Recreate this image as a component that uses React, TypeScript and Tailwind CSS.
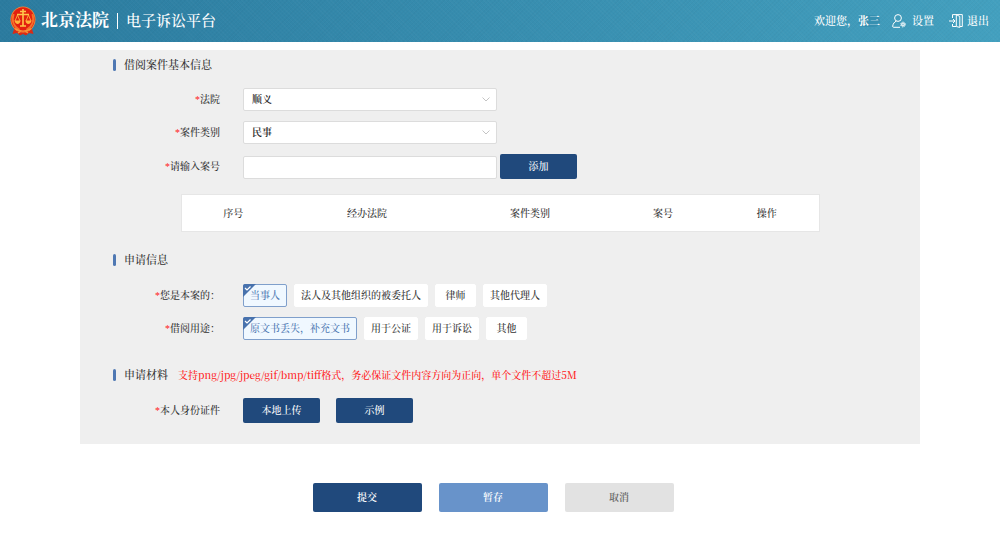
import React, { useState } from "react";
import clsx from "clsx";

const parties = ["当事人", "法人及其他组织的被委托人", "律师", "其他代理人"];
const purposes = ["原文书丢失，补充文书", "用于公证", "用于诉讼", "其他"];

const columns = [
  { title: "序号", width: "w-[104px]" },
  { title: "经办法院", width: "w-[164px]" },
  { title: "案件类别", width: "w-[162px]" },
  { title: "案号", width: "w-[104px]" },
  { title: "操作", width: "w-[104px]" },
];

const Emblem = () => (
  <svg viewBox="0 0 26 30" className="h-[30px] w-[26px]" aria-hidden="true">
    <path d="M5 20 L2.5 28 L7 27 L10 29.5 L13 28 L16 29.5 L19 27 L23.5 28 L21 20 Z" fill="#dc2a14" />
    <ellipse cx="13" cy="13.5" rx="12.5" ry="13" fill="#f08a3a" />
    <ellipse cx="13" cy="13.5" rx="11.6" ry="12.2" fill="#e3200f" />
    <path d="M3.5 8 C1.5 15 4 21 9.5 24 M22.5 8 C24.5 15 22 21 16.5 24" stroke="#f5702a" strokeWidth="2" fill="none" />
    <path d="M13 3 V20 M7 8.5 H19 M10 5.5 H16 M10 20 H16" stroke="#ffc64a" strokeWidth="1.6" fill="none" />
    <path d="M7.5 9 L5 15 M7.5 9 L10 15 M18.5 9 L16 15 M18.5 9 L21 15" stroke="#ffb03a" strokeWidth="0.9" fill="none" />
    <path d="M4.5 14.5 H10.5 C10.5 19 5 19 4.5 14.5 Z M15.5 14.5 H21.5 C21 19 15.5 19 15.5 14.5 Z" fill="#ffb43c" />
    <path d="M5 22.5 C9 26 17 26 21 22.5 M8 27 L10.5 25.5 M18 27 L15.5 25.5" stroke="#f8963a" strokeWidth="1.2" fill="none" />
  </svg>
);

const UserIcon = () => (
  <svg viewBox="0 0 14 14" className="size-[14px]" fill="none" stroke="currentColor" aria-hidden="true">
    <circle cx="6" cy="4" r="3.4" />
    <path d="M8 13.3 H1.6 C0.9 13.3 0.6 12.9 0.7 12.2 C1 9.8 2.4 7.8 4.4 7.1" />
    <circle cx="11" cy="10.5" r="1.6" fill="currentColor" fillOpacity="0.5" />
    <circle cx="11" cy="10.5" r="2.5" strokeDasharray="1 1" strokeWidth="0.8" />
  </svg>
);

const ExitIcon = () => (
  <svg viewBox="0 0 14 14" className="size-[14px]" fill="none" stroke="currentColor" aria-hidden="true">
    <path d="M3.5 4 V0.6 H13.3 V12.5 H11 M3.5 10 V12.5 H7" />
    <path d="M7.3 0.6 L10.8 2.5 V13.4 L7.3 12.5 Z" />
    <path d="M0 7 H6 M4 5 L6 7 L4 9" />
  </svg>
);

const SectionTitle: React.FC<{ title: string; note?: string }> = ({ title, note }) => (
  <div className="flex h-4 items-center pl-[33px]">
    <span className="h-3 w-[3px] rounded-full bg-[#4f78b3]" />
    <h2 className="ml-2 text-[11px] leading-4 font-medium text-[#333]">{title}</h2>
    {note && (
      <p className="ml-[10px] font-['Noto_Serif_CJK_SC','Liberation_Serif',serif] text-[10px] leading-4 font-medium text-[#ff1a1a]">
        {note}
      </p>
    )}
  </div>
);

const LabelText: React.FC<{ children: React.ReactNode }> = ({ children }) => (
  <>
    <span className="text-[#ff1a1a]">*</span>
    {children}
  </>
);

const labelClass = "w-[140px] shrink-0 text-right text-[10px] leading-4 font-medium text-[#333]";

const SelectField: React.FC<{ id: string; label: string; options: string[] }> = ({
  id,
  label,
  options,
}) => (
  <div className="flex items-center gap-[23px]">
    <label htmlFor={id} className={labelClass}>
      <LabelText>{label}</LabelText>
    </label>
    <div className="relative w-[254px]">
      <select
        id={id}
        className="block h-[23px] w-full appearance-none rounded-xs border border-[#dcdcdc] bg-white pl-2 text-[10px] font-semibold text-[#222]"
      >
        {options.map((option) => (
          <option key={option}>{option}</option>
        ))}
      </select>
      <svg
        viewBox="0 0 8 5"
        className="pointer-events-none absolute top-[9px] right-[7px] h-[5px] w-2"
        fill="none"
        stroke="#c4c4c4"
        aria-hidden="true"
      >
        <path d="M0.5 0.5 L4 4 L7.5 0.5" />
      </svg>
    </div>
  </div>
);

const OptionGroup: React.FC<{ name: string; label: string; options: string[] }> = ({
  name,
  label,
  options,
}) => {
  const [selected, setSelected] = useState(options[0]);

  return (
    <div role="radiogroup" aria-labelledby={name} className="flex items-center gap-[23px]">
      <span id={name} className={labelClass}>
        <LabelText>{label}</LabelText>
      </span>
      <div className="flex flex-wrap gap-[7px]">
        {options.map((option) => (
          <label
            key={option}
            className={clsx(
              "relative flex h-[23px] min-w-[41px] cursor-pointer items-center justify-center rounded-xs border px-[6px] text-[10px] font-medium",
              option === selected
                ? "border-[#7f9fcb] bg-[#f0f8ff] text-[#4f78b3]"
                : "border-white bg-white text-[#333]"
            )}
          >
            <input
              type="radio"
              name={name}
              checked={option === selected}
              onChange={() => setSelected(option)}
              className="sr-only"
            />
            {option === selected && (
              <svg viewBox="0 0 13 13" className="absolute -top-px -left-px size-[13px]" aria-hidden="true">
                <path d="M0 2 Q0 0 2 0 H13 L0 13 Z" fill="#4872ad" />
                <path d="M2 4 L4 6 L7.5 2.5" stroke="#fff" strokeWidth="1.2" fill="none" />
              </svg>
            )}
            <span className="relative">{option}</span>
          </label>
        ))}
      </div>
    </div>
  );
};

const smallButton = "h-[25px] w-[77px] rounded-xs bg-[#20497c] text-[10px] font-medium text-white";
const largeButton = "h-[29px] w-[109px] rounded-xs text-[10px] font-semibold";

const App: React.FC = () => {
  const [caseNumber, setCaseNumber] = useState("");

  return (
    <div className="min-h-screen bg-white font-['Liberation_Serif','Noto_Serif_CJK_SC','Noto_Sans_CJK_SC',serif]">
      <header className="bg-linear-to-r from-[#2b7b9f] to-[#43a0bf] text-white">
        <div className="flex h-[42px] items-center justify-between bg-[repeating-linear-gradient(45deg,transparent_0_2px,rgba(255,255,255,0.02)_2px_3px),repeating-linear-gradient(-45deg,transparent_0_2px,rgba(0,0,0,0.02)_2px_3px)] pr-[11px] pl-[10px]">
          <div className="flex items-center">
            <Emblem />
            <h1 className="ml-[5px] flex items-center">
              <span className="text-[17px] leading-6 font-bold">北京法院</span>
              <span className="mx-2 h-4 w-px bg-white" />
              <span className="text-[15px] leading-6 font-medium">电子诉讼平台</span>
            </h1>
          </div>
          <nav className="flex items-center gap-3 text-[11px] leading-4 font-medium">
            <p>
              欢迎您，
              <span className="rounded-full bg-[#3790b1] font-bold">张三</span>
            </p>
            <a href="#settings" className="flex items-center gap-[6px]">
              <UserIcon />
              设置
            </a>
            <a href="#logout" className="ml-[3px] flex items-center gap-1">
              <ExitIcon />
              退出
            </a>
          </nav>
        </div>
      </header>

      <main className="mx-auto mt-2 w-[84%] bg-[#efefef] pt-[7px] pb-[21px]">
        <section>
          <SectionTitle title="借阅案件基本信息" />
          <div className="mt-[15px] flex flex-col gap-[10px]">
            <SelectField id="court" label="法院" options={["顺义", "朝阳", "海淀"]} />
            <SelectField id="category" label="案件类别" options={["民事", "刑事", "行政"]} />
            <div className="flex items-center gap-[23px]">
              <label htmlFor="caseNumber" className={labelClass}>
                <LabelText>请输入案号</LabelText>
              </label>
              <div className="flex items-end gap-[3px]">
                <input
                  id="caseNumber"
                  type="text"
                  value={caseNumber}
                  onChange={(e) => setCaseNumber(e.target.value)}
                  className="h-[23px] w-[254px] rounded-xs border border-[#dcdcdc] bg-white px-2 text-[10px]"
                />
                <button type="button" className={smallButton}>
                  添加
                </button>
              </div>
            </div>
          </div>
          <table className="mx-auto mt-[15px] w-[76%] table-fixed border border-[#e6e6e6] bg-white text-[10px] text-[#333]">
            <thead>
              <tr className="h-[37px]">
                {columns.map((column) => (
                  <th key={column.title} scope="col" className={clsx("text-center font-medium", column.width)}>
                    {column.title}
                  </th>
                ))}
              </tr>
            </thead>
          </table>
        </section>

        <section className="mt-5">
          <SectionTitle title="申请信息" />
          <div className="mt-4 flex flex-col gap-[10px]">
            <OptionGroup name="party" label="您是本案的：" options={parties} />
            <OptionGroup name="purpose" label="借阅用途：" options={purposes} />
          </div>
        </section>

        <section className="mt-[27px]">
          <SectionTitle
            title="申请材料"
            note="支持png/jpg/jpeg/gif/bmp/tiff格式，务必保证文件内容方向为正向，单个文件不超过5M"
          />
          <div className="mt-[15px] flex items-center gap-[23px]">
            <span className={labelClass}>
              <LabelText>本人身份证件</LabelText>
            </span>
            <div className="flex gap-4">
              <button type="button" className={smallButton}>
                本地上传
              </button>
              <button type="button" className={smallButton}>
                示例
              </button>
            </div>
          </div>
        </section>
      </main>

      <footer className="mt-[39px] flex justify-center gap-[17px] pr-[14px]">
        <button type="submit" className={clsx(largeButton, "bg-[#20497c] text-white")}>
          提交
        </button>
        <button type="button" className={clsx(largeButton, "bg-[#6893ca] text-white")}>
          暂存
        </button>
        <button type="button" className={clsx(largeButton, "bg-[#e2e2e2] text-[#666]")}>
          取消
        </button>
      </footer>
    </div>
  );
};

export default App;
